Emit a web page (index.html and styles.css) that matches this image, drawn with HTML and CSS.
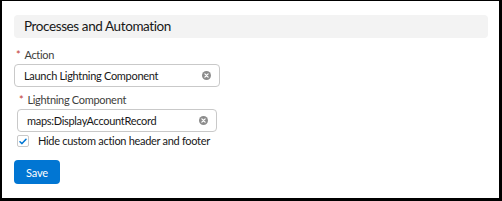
FILE: index.html
```html
<!DOCTYPE html>
<html>
<head>
<meta charset="utf-8">
<link rel="stylesheet" href="styles.css">
</head>
<body>
<div class="frame">
  <div class="section-header">Processes and Automation</div>
  <div class="field">
    <label class="label"><span class="req">*</span>Action</label>
    <div class="input input-wide">
      <span class="value">Launch Lightning Component</span>
      <span class="clear"><svg width="9" height="9" viewBox="0 0 10 10"><circle cx="5" cy="5" r="5" fill="#8c8c8c"/><path d="M3.2 3.2 L6.8 6.8 M6.8 3.2 L3.2 6.8" stroke="#fff" stroke-width="1.4" stroke-linecap="round"/></svg></span>
    </div>
  </div>
  <div class="field field-shift">
    <label class="label"><span class="req">*</span>Lightning Component</label>
    <div class="input input-narrow">
      <span class="value">maps:DisplayAccountRecord</span>
      <span class="clear"><svg width="9" height="9" viewBox="0 0 10 10"><circle cx="5" cy="5" r="5" fill="#8c8c8c"/><path d="M3.2 3.2 L6.8 6.8 M6.8 3.2 L3.2 6.8" stroke="#fff" stroke-width="1.4" stroke-linecap="round"/></svg></span>
    </div>
    <div class="check-row">
      <span class="checkbox"><svg width="8" height="7" viewBox="0 0 8 7"><path d="M1 3.8 L3 5.6 L7 1.2" fill="none" stroke="#0176d3" stroke-width="1.5" stroke-linecap="round" stroke-linejoin="round"/></svg></span>
      <span class="check-label">Hide custom action header and footer</span>
    </div>
  </div>
  <div class="actions">
    <button class="btn-save">Save</button>
  </div>
</div>
</body>
</html>
```
FILE: styles.css
```css
html, body {
  margin: 0;
  padding: 0;
  background: #fff;
}
.frame {
  box-sizing: border-box;
  width: 502px;
  height: 201px;
  border-style: solid;
  border-color: #000;
  border-width: 1px 3px 3px 2px;
  padding: 14px 11px 0 12px;
  font-family: Lato, "Open Sans", sans-serif;
  color: #181818;
  display: flex;
  flex-direction: column;
}
.section-header {
  height: 23px;
  background: #f3f3f3;
  border-radius: 4px;
  font-size: 13.5px;
  letter-spacing: -0.4px;
  line-height: 23px;
  padding-left: 10px;
}
.field {
  display: flex;
  flex-direction: column;
  margin-top: 10px;
}
.field-shift {
  margin-left: 3px;
  margin-top: 6px;
}
.label {
  font-size: 11px;
  letter-spacing: -0.3px;
  line-height: 14px;
  color: #3e3e3c;
  margin-left: 2px;
  margin-bottom: 2px;
}
.req {
  color: #c23934;
  margin-right: 4px;
}
.input {
  box-sizing: border-box;
  height: 23px;
  border: 1px solid #c9c9c9;
  border-radius: 4px;
  display: flex;
  align-items: center;
  justify-content: space-between;
  padding: 0 8px 0 9px;
  font-size: 11px;
  letter-spacing: -0.3px;
}
.input-wide { width: 206px; }
.input-narrow { width: 200px; }
.clear { display: flex; }
.check-row {
  display: flex;
  align-items: center;
  margin-top: 3px;
  gap: 9px;
}
.checkbox {
  box-sizing: border-box;
  width: 12px;
  height: 12px;
  border: 1px solid #c9c9c9;
  border-radius: 2px;
  display: flex;
  align-items: center;
  justify-content: center;
}
.check-label {
  font-size: 11px;
  letter-spacing: -0.3px;
  line-height: 12px;
}
.actions {
  margin-top: 13px;
}
.btn-save {
  width: 46px;
  height: 24px;
  background: #0176d3;
  border: none;
  border-radius: 4px;
  color: #fff;
  font-family: Lato, "Open Sans", sans-serif;
  font-size: 11px;
  letter-spacing: -0.2px;
  padding: 0;
}
```
